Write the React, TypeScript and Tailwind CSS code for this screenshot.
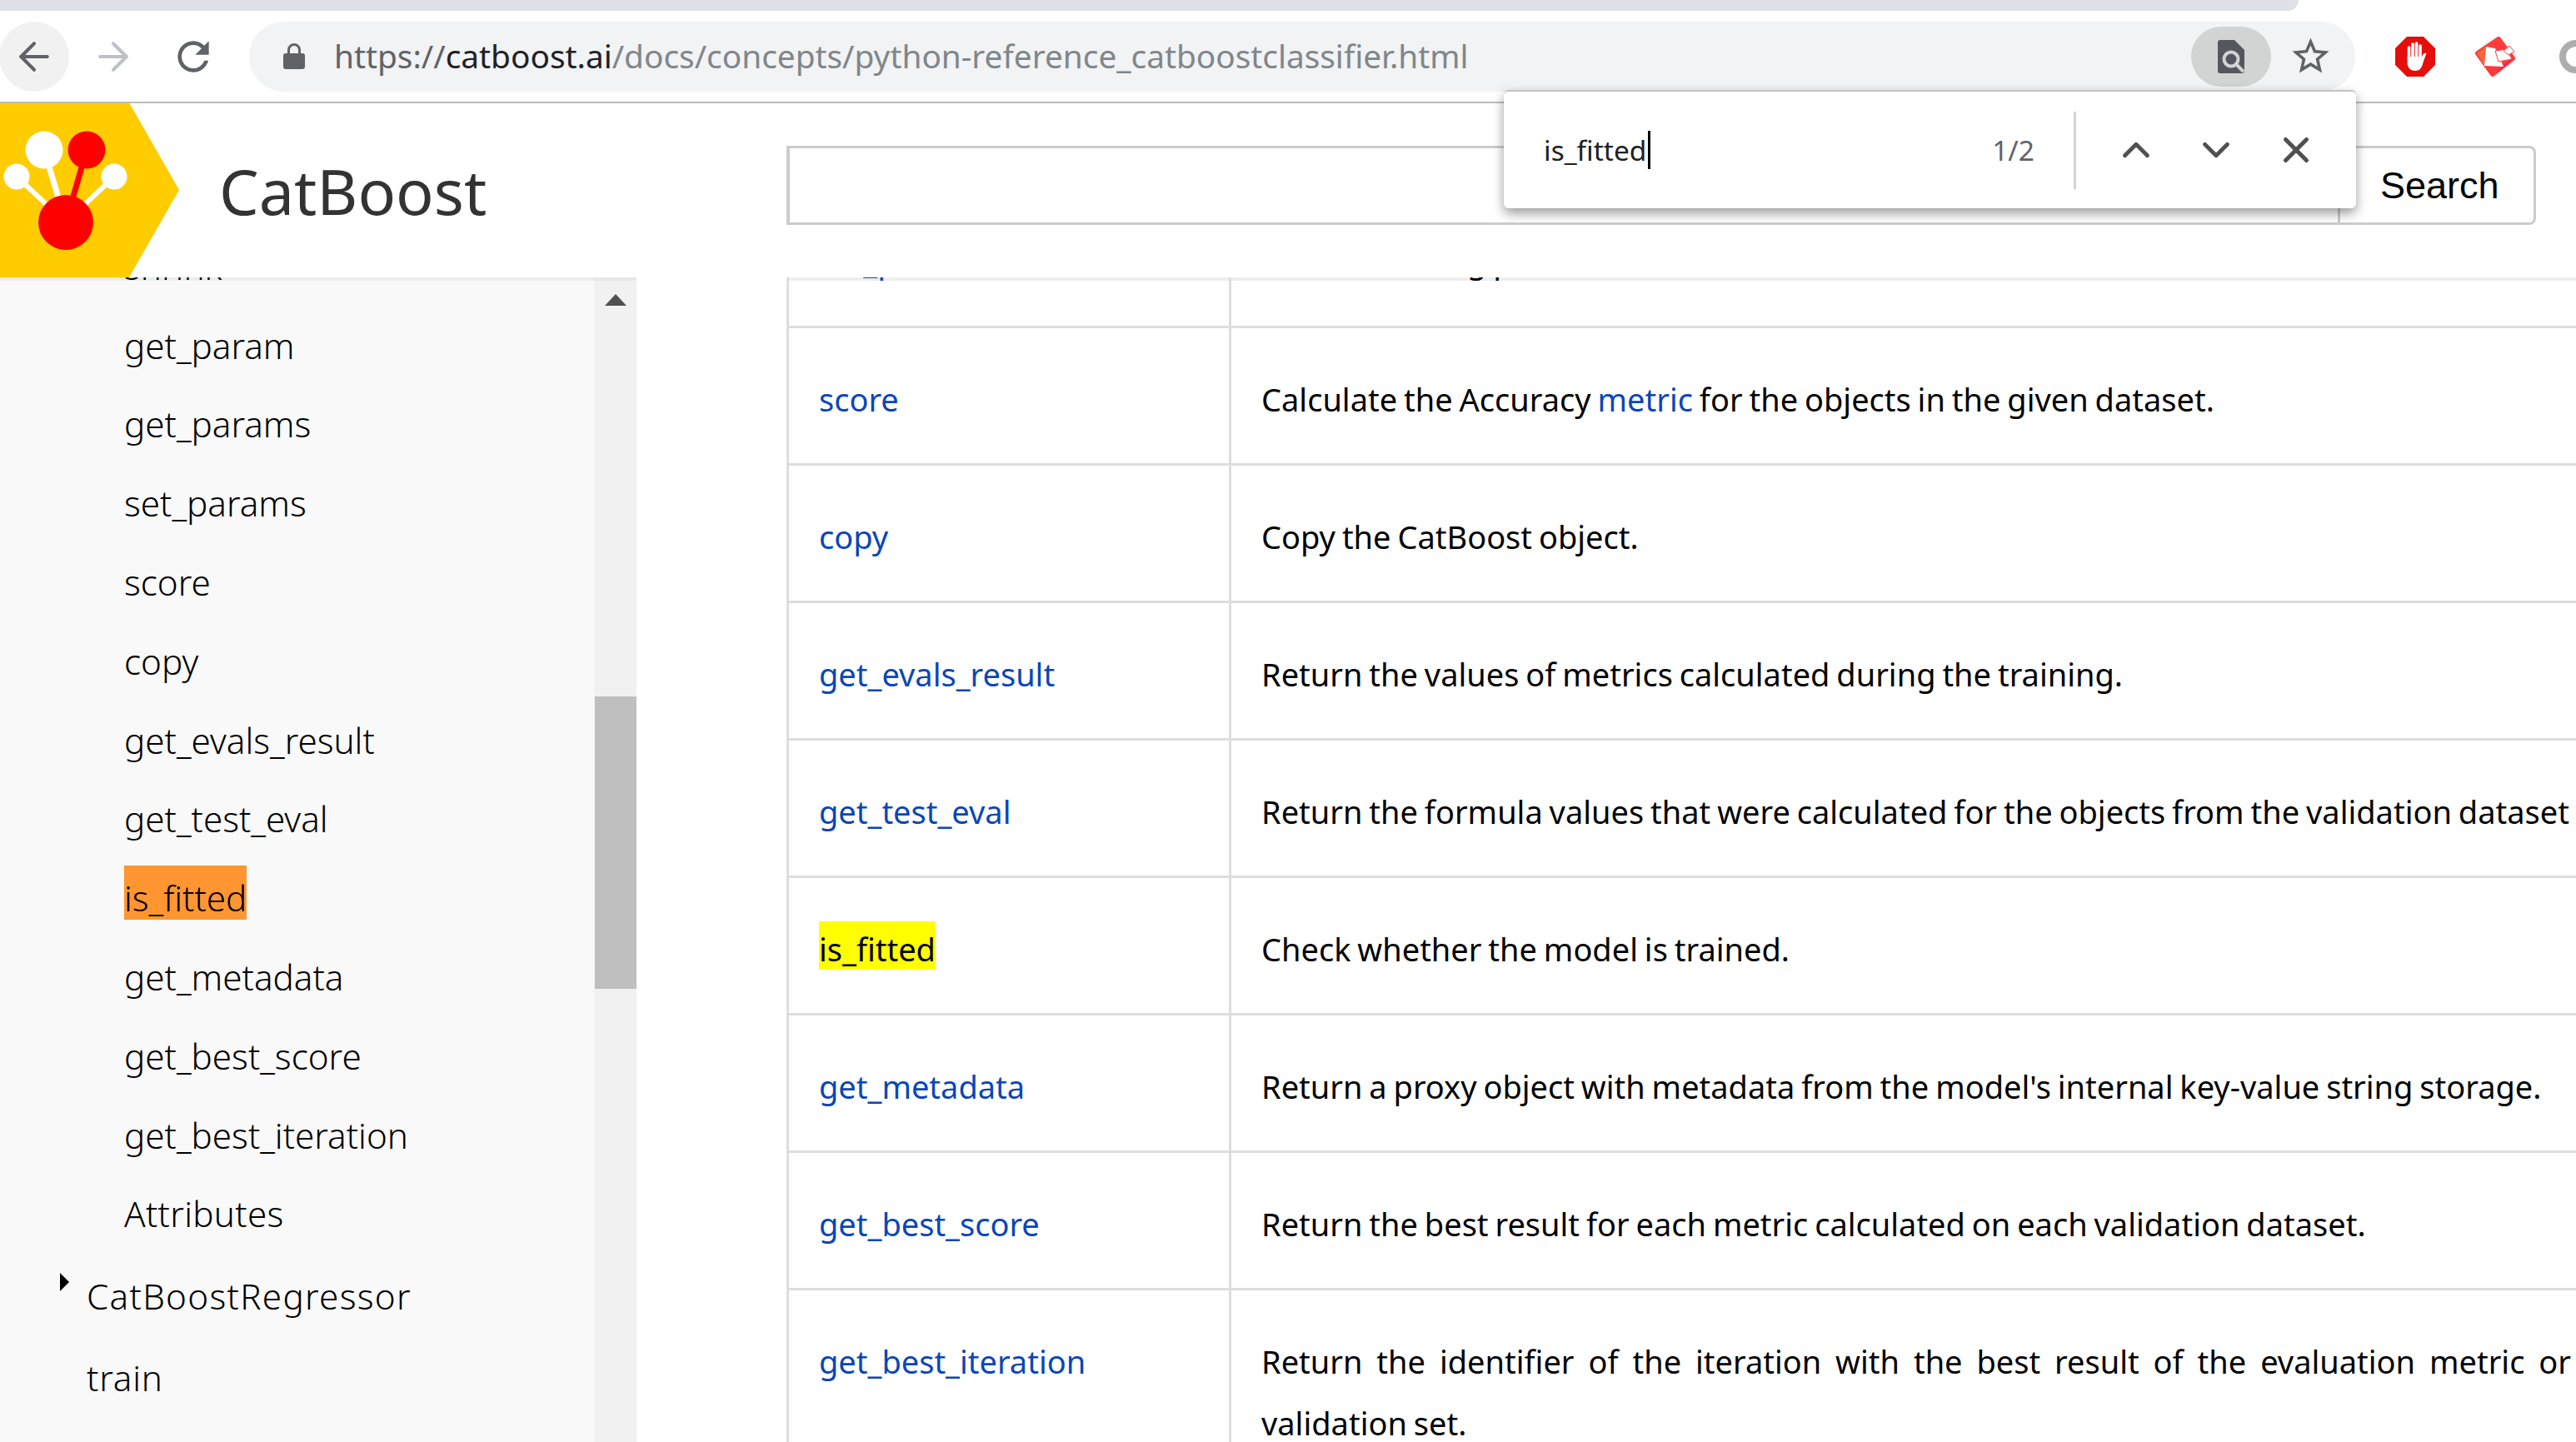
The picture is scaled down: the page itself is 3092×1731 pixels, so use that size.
import { ArrowLeft, ArrowRight, ChevronDown, ChevronUp, X } from 'lucide-react';

const sideItems = [
  'shrink',
  'get_param',
  'get_params',
  'set_params',
  'score',
  'copy',
  'get_evals_result',
  'get_test_eval',
  'is_fitted',
  'get_metadata',
  'get_best_score',
  'get_best_iteration',
];

const rows = [
  { name: 'score', desc: <>Calculate the Accuracy <span className="text-[#0b46b8]">metric</span> for the objects in the given dataset.</> },
  { name: 'copy', desc: 'Copy the CatBoost object.' },
  { name: 'get_evals_result', desc: 'Return the values of metrics calculated during the training.' },
  { name: 'get_test_eval', desc: 'Return the formula values that were calculated for the objects from the validation dataset' },
  { name: 'is_fitted', desc: 'Check whether the model is trained.' },
  { name: 'get_metadata', desc: "Return a proxy object with metadata from the model's internal key-value string storage." },
  { name: 'get_best_score', desc: 'Return the best result for each metric calculated on each validation dataset.' },
];

function Logo() {
  return (
    <svg width="215" height="209" viewBox="0 0 215 209" className="shrink-0">
      <polygon points="0,-1 155,-1 215,104 155,209 0,209" fill="#ffcc00" />
      <line x1="79" y1="143" x2="20" y2="88" stroke="#fff" strokeWidth="6" />
      <line x1="79" y1="143" x2="137" y2="88" stroke="#fff" strokeWidth="6" />
      <line x1="79" y1="143" x2="53" y2="56" stroke="#fff" strokeWidth="7" />
      <line x1="79" y1="143" x2="104" y2="56" stroke="#ff0000" strokeWidth="7" />
      <circle cx="20" cy="88" r="15.5" fill="#fff" />
      <circle cx="137" cy="88" r="15.5" fill="#fff" />
      <circle cx="53" cy="56" r="22.5" fill="#fff" />
      <circle cx="104" cy="56" r="22.5" fill="#ff0000" />
      <circle cx="79" cy="143" r="33" fill="#ff0000" />
    </svg>
  );
}

function StopIcon() {
  return (
    <svg width="48" height="48" viewBox="0 0 48 48" className="shrink-0 ml-[48px]">
      <polygon points="14,0 34,0 48,14 48,34 34,48 14,48 0,34 0,14" fill="#e50e0b" />
      <g stroke="#fff" strokeWidth="3.6" strokeLinecap="round">
        <line x1="16.5" y1="13" x2="16.5" y2="27" />
        <line x1="21" y1="9" x2="21" y2="27" />
        <line x1="25.5" y1="8" x2="25.5" y2="27" />
        <line x1="30" y1="11" x2="30" y2="27" />
      </g>
      <path d="M14.6 24 L14.6 32 C15 38 19 41 24 41 C29 41 31.5 38 33 33 C34 29 36 24 37.5 20 C35 19 33 21 32 24 L31.8 24 Z" fill="#fff" />
    </svg>
  );
}

function ClipIcon() {
  return (
    <svg width="48" height="48" viewBox="0 0 48 48" className="shrink-0 ml-[48px]">
      <polygon points="28,3 45,26 21,45 3,20" fill="#ff3b3b" stroke="#ff3b3b" strokeWidth="6" strokeLinejoin="round" />
      <polygon points="26,2 12,12 11,35 2,20" fill="#f26a3c" />
      <polygon points="34,34 46,26 24,45" fill="#f0174f" />
      <polygon points="13,12 24,14 34,36 11,35" fill="#fff" />
      <polygon points="24,17 38,15 44,27 28,30" fill="#fff" stroke="#ff3b3b" strokeWidth="1" />
      <polygon points="34,17 41,11 47,18 40,22" fill="#fff" stroke="#ff3b3b" strokeWidth="1" />
    </svg>
  );
}

function FindIcon() {
  return (
    <svg width="32" height="40" viewBox="0 0 32 40">
      <path d="M3 0 H20 L32 12 V37 a3 3 0 0 1 -3 3 H3 a3 3 0 0 1 -3 -3 V3 a3 3 0 0 1 3 -3 Z" fill="#54575c" />
      <circle cx="16" cy="23" r="8.5" fill="none" stroke="#d2d4d4" strokeWidth="4" />
      <line x1="22" y1="29" x2="31" y2="38" stroke="#d2d4d4" strokeWidth="4" />
    </svg>
  );
}

function Toolbar() {
  return (
    <div className="flex items-center h-[111px] border-b-[2px] border-[#bcbcbc] overflow-hidden">
      <div className="w-[84px] h-[84px] -ml-px shrink-0 rounded-full bg-[#f1f1f2] flex items-center justify-center">
        <ArrowLeft size={54} strokeWidth={1.8} color="#5f6368" />
      </div>
      <div className="w-[96px] ml-[5px] shrink-0 flex justify-center">
        <ArrowRight size={54} strokeWidth={1.8} color="#bdc1c6" />
      </div>
      <div className="w-[96px] shrink-0 flex justify-center">
        <svg width="56" height="56" viewBox="0 0 24 24" fill="#5f6368">
          <path d="M17.65 6.35C16.2 4.9 14.21 4 12 4c-4.42 0-7.99 3.58-7.99 8s3.57 8 7.99 8c3.73 0 6.84-2.55 7.73-6h-2.08c-.82 2.33-3.04 4-5.65 4-3.31 0-6-2.69-6-6s2.69-6 6-6c1.66 0 3.14.69 4.22 1.78L13 11h7V4l-2.35 2.35z" />
        </svg>
      </div>
      <div className="w-[2528px] h-[84px] ml-[19px] shrink-0 rounded-full bg-[#f1f3f4] flex items-center pl-[41px] pr-[27px]">
        <svg width="26" height="31" viewBox="0 0 26 31" className="shrink-0">
          <path d="M6.5 13 V8 a6.5 6.5 0 0 1 13 0 V13" fill="none" stroke="#5f6368" strokeWidth="3" />
          <rect x="0" y="12" width="26" height="19" rx="3" fill="#5f6368" />
        </svg>
        <div className="ml-[35px] flex-1 font-['Noto_Sans',sans-serif] text-[38.8px] text-[#80868b] whitespace-nowrap">
          <span className="text-[#5f6368]">https://</span>
          <span className="text-[#202124]">catboost.ai</span>
          /docs/concepts/python-reference_catboostclassifier.html
        </div>
        <div className="w-[96px] h-[72px] shrink-0 rounded-full bg-[#d2d4d4] flex items-center justify-center">
          <FindIcon />
        </div>
        <svg width="53" height="53" viewBox="0 0 24 24" fill="#5f6368" className="ml-[21px] shrink-0">
          <path d="M22 9.24l-7.19-.62L12 2 9.19 8.63 2 9.24l5.46 4.73L5.82 21 12 17.27 18.18 21l-1.63-7.03L22 9.24zM12 15.4l-3.76 2.27 1-4.28-3.32-2.88 4.38-.38L12 6.1l1.71 4.04 4.38.38-3.32 2.88 1 4.28L12 15.4z" />
        </svg>
      </div>
      <StopIcon />
      <ClipIcon />
      <div className="w-[40px] h-[40px] ml-[53px] shrink-0 rounded-full border-[8px] border-[#adadad]" />
    </div>
  );
}

function SiteHeader() {
  return (
    <div className="flex h-[209px] bg-white">
      <Logo />
      <div className="w-[729px] shrink-0 pl-[48px] flex items-center font-['Noto_Sans',sans-serif] text-[75.5px] text-[#333333]">
        CatBoost
      </div>
      <div className="mt-[51px] flex h-[95px]">
        <div className="w-[1865px] border-[3px] border-l-[4px] border-[#cccccc]" />
        <div className="w-[235px] border-[3px] border-l-0 border-[#cccccc] rounded-r-[8px] flex items-center pl-[48px] font-['Liberation_Sans',sans-serif] text-[45px] text-black">
          Search
        </div>
      </div>
    </div>
  );
}

function FindBar() {
  return (
    <div className="absolute left-[1805px] top-[108px] w-[1023px] h-[142px] z-20 bg-white rounded-[6px] border-t-[2px] border-[#c4c4c4] shadow-[0_6px_14px_rgba(0,0,0,0.4)] flex items-center pl-[48px] pr-[24px] font-['Noto_Sans',sans-serif] text-[33.5px] text-[#202124]">
      <span>is_fitted</span>
      <span className="w-[3px] h-[46px] ml-[2px] bg-black" />
      <span className="ml-auto text-[#5f6368]">1/2</span>
      <span className="w-[3px] h-[93px] ml-[47px] mr-[24px] bg-[#d3d3d3]" />
      <span className="w-[96px] flex justify-center"><ChevronUp size={54} strokeWidth={2.1} color="#505050" /></span>
      <span className="w-[96px] flex justify-center"><ChevronDown size={54} strokeWidth={2.1} color="#505050" /></span>
      <span className="w-[96px] flex justify-center"><X size={50} strokeWidth={2.4} color="#505050" /></span>
    </div>
  );
}

function Sidebar() {
  return (
    <div className="w-[713px] h-[1398px] shrink-0 overflow-hidden bg-[#f9f9f9] shadow-[inset_0_4px_0_#ebebeb] font-['Noto_Sans',sans-serif] font-light text-[42.2px] text-black">
      <div className="-mt-[61px] pl-[149px]">
        {sideItems.map((item) => (
          <div key={item} className="h-[94.8px] flex items-center">
            {item === 'is_fitted' ? (
              <mark className="inline-block -mt-[12px] pt-[12px] leading-[53px] bg-[#ff9632] text-black">{item}</mark>
            ) : (
              item
            )}
          </div>
        ))}
        <div className="h-[94.8px] flex items-center tracking-[0.3px]">Attributes</div>
      </div>
      <div className="pl-[104px] h-[98px] mt-[2px] flex items-center relative tracking-[1.3px]">
        <svg width="11" height="22" viewBox="0 0 11 22" className="absolute left-[72px] top-[22px]">
          <polygon points="0,0 11,11 0,22" fill="#000" />
        </svg>
        CatBoostRegressor
      </div>
      <div className="pl-[104px] h-[98px] flex items-center tracking-[0.8px]">train</div>
    </div>
  );
}

function SideScrollbar() {
  return (
    <div className="w-[51px] h-[1398px] shrink-0 bg-[#f1f1f1] shadow-[inset_0_4px_0_#e6e6e6] pl-[1px]">
      <div className="mt-[20px] ml-[12px]">
        <svg width="26" height="14" viewBox="0 0 26 14" className="block">
          <polygon points="13,0 26,14 0,14" fill="#505050" />
        </svg>
      </div>
      <div className="mt-[469px] h-[351px] bg-[#bfbfbf]" />
    </div>
  );
}

function MethodTable() {
  return (
    <div className="ml-[180px] flex-1 h-[1398px] overflow-hidden shadow-[inset_0_4px_0_#eeeeee] font-['Noto_Sans',sans-serif] text-[38px] text-black [word-spacing:-2px]">
      <div className="-mt-[105px] w-[2400px] border-l-[3px] border-[#dddddd]">
        <div className="flex items-center h-[166px] pt-[8px] border-b-[3px] border-[#dddddd]">
          <div className="w-[531px] -mt-[8px] pt-[8px] h-[163px] shrink-0 border-r-[3px] border-[#dddddd] pl-[36px] flex items-center text-[#0b46b8]">set_params</div>
          <div className="pl-[36px]">Set the training parameters.</div>
        </div>
        {rows.map((row) => (
          <div key={row.name} className="flex items-center h-[165px] pt-[8px] border-b-[3px] border-[#dddddd]">
            <div className="w-[531px] -mt-[8px] pt-[8px] h-[162px] shrink-0 border-r-[3px] border-[#dddddd] pl-[36px] flex items-center text-[#0b46b8]">
              {row.name === 'is_fitted' ? (
                <mark className="inline-block -mt-[8px] pt-[8px] leading-[50px] bg-[#ffff00] text-black">{row.name}</mark>
              ) : (
                row.name
              )}
            </div>
            <div className="pl-[36px] whitespace-nowrap">{row.desc}</div>
          </div>
        ))}
        <div className="flex h-[300px]">
          <div className="w-[531px] h-full shrink-0 border-r-[3px] border-[#dddddd] pl-[36px] pt-[48px] leading-[74px] text-[#0b46b8]">get_best_iteration</div>
          <div className="w-[1608px] pl-[36px] pt-[48px] leading-[74px] text-justify">
            Return the identifier of the iteration with the best result of the evaluation metric or validation set.
          </div>
        </div>
      </div>
    </div>
  );
}

export default function App() {
  return (
    <div className="relative w-[3092px] h-[1731px] overflow-hidden bg-white">
      <div className="h-[13px] w-[2759px] bg-[#dee1e6] rounded-br-[16px]" />
      <Toolbar />
      <SiteHeader />
      <FindBar />
      <div className="flex">
        <Sidebar />
        <SideScrollbar />
        <MethodTable />
      </div>
    </div>
  );
}
